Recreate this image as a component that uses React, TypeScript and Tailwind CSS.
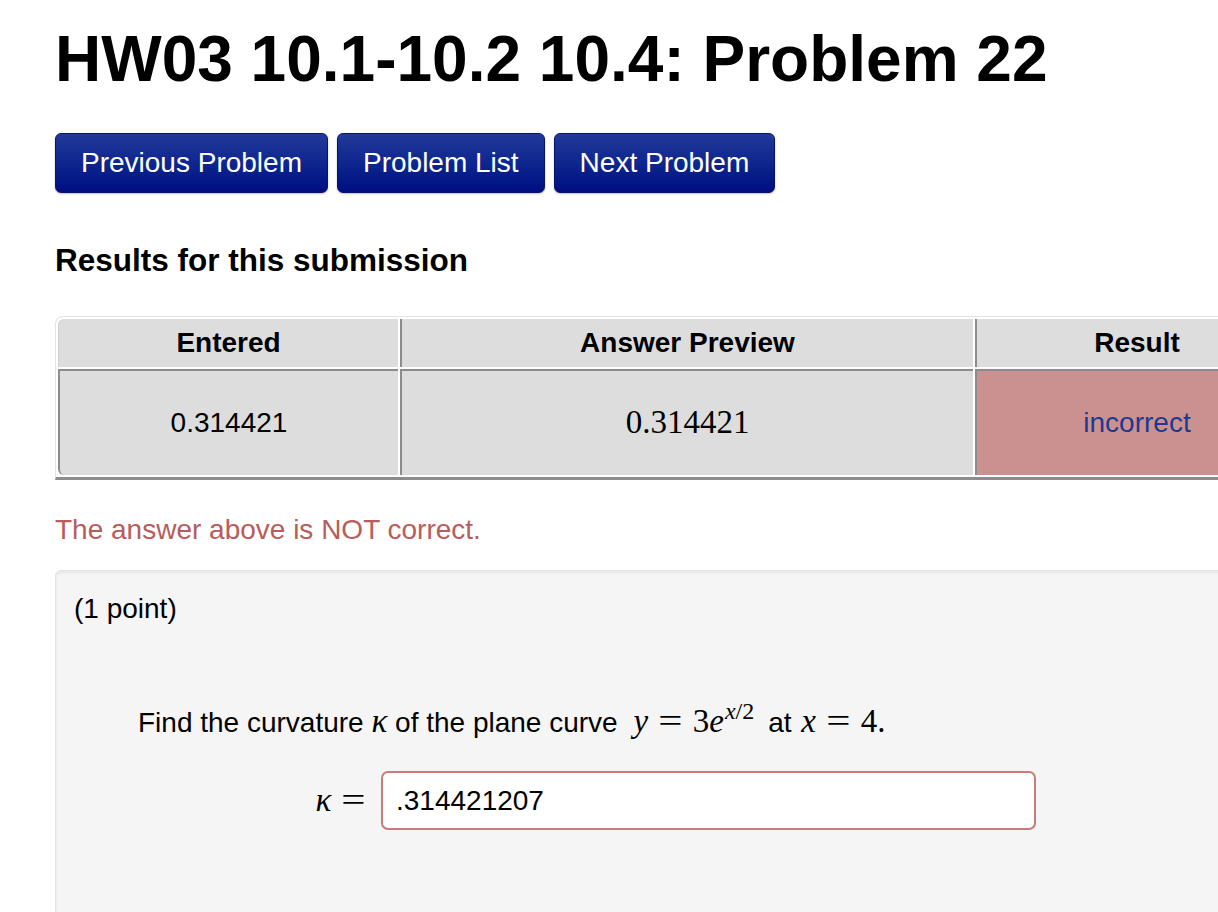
const sans = "font-['Liberation_Sans',Arial,sans-serif]";
const serif = "font-['Liberation_Serif','Times_New_Roman',serif]";

function NavButton({ label }: { label: string }) {
  return (
    <button
      type="button"
      className="flex h-[60px] items-center rounded-[6px] border border-[#0a1466] bg-gradient-to-b from-[#22399a] to-[#000c82] px-[25px] text-[28px] leading-none text-white shadow-[0_1px_2px_rgba(0,0,0,0.25)]"
    >
      {label}
    </button>
  );
}

function Eq() {
  return <span className="mx-[13px] inline-block scale-x-[1.3]">=</span>;
}

export default function App() {
  return (
    <div className={`${sans} h-[912px] w-[1218px] overflow-hidden bg-white text-black`}>
      <div className="w-[1400px] pl-[55px]">
        <h1 className="pt-[23px] text-[64px] font-bold leading-[72px]">HW03 10.1-10.2 10.4: Problem 22</h1>

        <div className="mt-[38px] flex gap-[9px]">
          <NavButton label="Previous Problem" />
          <NavButton label="Problem List" />
          <NavButton label="Next Problem" />
        </div>

        <h2 className="mt-[49px] text-[31.5px] font-bold leading-[36px]">Results for this submission</h2>

        <table className="mt-[38px] border-separate border-spacing-[2px] rounded-tl-[8px] border border-b-[3px] border-[#e4e4e4] border-b-[#8c8c8c] text-[28px]">
          <thead>
            <tr>
              <th className="h-[48px] w-[340px] rounded-tl-[6px] border-l border-[#cfcfcf] bg-[#dddddd] font-bold">Entered</th>
              <th className="h-[48px] w-[573px] border-l-2 border-[#8c8c8c] bg-[#dddddd] font-bold">Answer Preview</th>
              <th className="h-[48px] w-[322px] border-l-2 border-[#8c8c8c] bg-[#dddddd] font-bold">Result</th>
            </tr>
          </thead>
          <tbody>
            <tr>
              <td className="h-[106px] rounded-bl-[6px] border-l-2 border-t-2 border-[#8c8c8c] bg-[#dddddd] text-center font-normal">0.314421</td>
              <td className={`h-[106px] border-l-2 border-t-2 border-[#8c8c8c] bg-[#dddddd] text-center text-[33px] ${serif}`}>0.314421</td>
              <td className="h-[106px] border-l-2 border-t-2 border-[#8c8c8c] bg-[#cb9191] text-center text-[#1d3a8f]">incorrect</td>
            </tr>
          </tbody>
        </table>

        <p className="mt-[34px] text-[28px] leading-[32px] text-[#b85c5c]">The answer above is NOT correct.</p>

        <div className="mt-[24px] h-[400px] w-[1300px] rounded-[6px] border border-[#e3e3e3] bg-[#f5f5f5] px-[18px] pt-[22px] shadow-[inset_0_2px_3px_rgba(0,0,0,0.06)]">
          <p className="text-[28px] leading-[32px]">(1 point)</p>

          <div className="mt-[80px] pl-[64px] text-[28px] leading-[32px]">
            Find the curvature <i className={`${serif} text-[33px]`}>κ</i> of the plane curve{" "}
            <span className={`${serif} ml-[8px] text-[33px]`}>
              <i>y</i>
              <Eq />3<i>e</i>
              <span className="relative -top-[13px] ml-[1px] text-[24px]">
                <i>x</i>/2
              </span>
            </span>
            <span className="ml-[14px]">at</span>{" "}
            <span className={`${serif} ml-[2px] text-[33px]`}>
              <i>x</i>
              <Eq />4.
            </span>
          </div>

          <div className="mt-[31px] flex items-center">
            <div className={`${serif} flex w-[307px] justify-end pr-[14px] text-[33px]`}>
              <i>κ</i>
              <span className="ml-[13px] mr-[4px] inline-block scale-x-[1.3]">=</span>
            </div>
            <div className="flex h-[59px] w-[655px] items-center rounded-[7px] border-2 border-[#c97a7a] bg-white px-[13px] text-[28px]">
              .314421207
            </div>
          </div>
        </div>
      </div>
    </div>
  );
}
